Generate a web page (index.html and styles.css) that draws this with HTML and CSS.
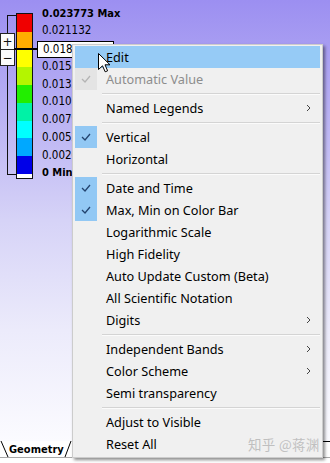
FILE: index.html
```html
<!DOCTYPE html>
<html>
<head>
<meta charset="utf-8">
<link rel="stylesheet" href="styles.css">
</head>
<body>
<div class="screen">
  <div class="viewport">
    <div class="legend">
      <div class="ctrl">
        <div class="bracket"></div>
        <div class="pm"><span class="pm-btn">+</span><span class="pm-btn">−</span></div>
      </div>
      <div class="bar">
        <div class="band b1"></div>
        <div class="band b2"></div>
        <div class="band b3"></div>
        <div class="band b4"></div>
        <div class="band b5"></div>
        <div class="band b6"></div>
        <div class="band b7"></div>
        <div class="band b8"></div>
        <div class="band b9"></div>
        <div class="band-min"></div>
      </div>
      <div class="labels">
        <div class="lbl bold">0.023773 Max</div>
        <div class="lbl">0.021132</div>
        <div class="lbl"><span class="edit">0.018492</span></div>
        <div class="lbl">0.015849</div>
        <div class="lbl">0.013208</div>
        <div class="lbl">0.010566</div>
        <div class="lbl">0.007924</div>
        <div class="lbl">0.005283</div>
        <div class="lbl">0.002641</div>
        <div class="lbl bold">0 Min</div>
      </div>
      <div class="marker"></div>
    </div>
  </div>
  <div class="tabbar">
    <div class="tab">
      <svg class="slant" width="9" height="16" viewBox="0 0 9 16"><path d="M1 0 L8 16" stroke="#000" stroke-width="1" fill="none"/></svg>
      <span class="tab-label">Geometry</span>
      <svg class="slant" width="8" height="16" viewBox="0 0 8 16"><path d="M7 0 L1 16" stroke="#000" stroke-width="1" fill="none"/></svg>
    </div>
    <div class="tab-fill"></div>
  </div>

  <div class="menu">
    <div class="item hover"><span class="chk"></span><span class="txt">Edit</span></div>
    <div class="item disabled"><span class="chk gray"><svg width="10" height="8" viewBox="0 0 10 8"><path d="M1 4 L4 7 L9 1" stroke="#b4b4b4" stroke-width="1.3" fill="none"/></svg></span><span class="txt">Automatic Value</span></div>
    <div class="sep"></div>
    <div class="item"><span class="chk"></span><span class="txt">Named Legends</span><svg class="chev" width="5" height="8" viewBox="0 0 5 8"><path d="M1 1 L4 4 L1 7" stroke="#444" stroke-width="1" fill="none"/></svg></div>
    <div class="sep"></div>
    <div class="item"><span class="chk on"><svg width="10" height="8" viewBox="0 0 10 8"><path d="M1 4 L4 7 L9 1" stroke="#23436e" stroke-width="1.3" fill="none"/></svg></span><span class="txt">Vertical</span></div>
    <div class="item"><span class="chk"></span><span class="txt">Horizontal</span></div>
    <div class="sep"></div>
    <div class="item"><span class="chk on"><svg width="10" height="8" viewBox="0 0 10 8"><path d="M1 4 L4 7 L9 1" stroke="#23436e" stroke-width="1.3" fill="none"/></svg></span><span class="txt">Date and Time</span></div>
    <div class="item"><span class="chk on"><svg width="10" height="8" viewBox="0 0 10 8"><path d="M1 4 L4 7 L9 1" stroke="#23436e" stroke-width="1.3" fill="none"/></svg></span><span class="txt">Max, Min on Color Bar</span></div>
    <div class="item"><span class="chk"></span><span class="txt">Logarithmic Scale</span></div>
    <div class="item"><span class="chk"></span><span class="txt">High Fidelity</span></div>
    <div class="item"><span class="chk"></span><span class="txt">Auto Update Custom (Beta)</span></div>
    <div class="item"><span class="chk"></span><span class="txt">All Scientific Notation</span></div>
    <div class="item"><span class="chk"></span><span class="txt">Digits</span><svg class="chev" width="5" height="8" viewBox="0 0 5 8"><path d="M1 1 L4 4 L1 7" stroke="#444" stroke-width="1" fill="none"/></svg></div>
    <div class="sep"></div>
    <div class="item"><span class="chk"></span><span class="txt">Independent Bands</span><svg class="chev" width="5" height="8" viewBox="0 0 5 8"><path d="M1 1 L4 4 L1 7" stroke="#444" stroke-width="1" fill="none"/></svg></div>
    <div class="item"><span class="chk"></span><span class="txt">Color Scheme</span><svg class="chev" width="5" height="8" viewBox="0 0 5 8"><path d="M1 1 L4 4 L1 7" stroke="#444" stroke-width="1" fill="none"/></svg></div>
    <div class="item"><span class="chk"></span><span class="txt">Semi transparency</span></div>
    <div class="sep"></div>
    <div class="item"><span class="chk"></span><span class="txt">Adjust to Visible</span></div>
    <div class="item"><span class="chk"></span><span class="txt">Reset All</span></div>
  </div>

  <svg class="cursor" width="13" height="20" viewBox="0 0 13 20"><path d="M0.5 0.5 L0.5 16.5 L4.5 12.8 L7.2 18.8 L9.6 17.8 L7 11.8 L12 11.8 Z" fill="#fff" stroke="#000" stroke-width="1" stroke-linejoin="miter"/></svg>
  <div class="watermark">知乎 @蒋渊</div>
</div>
</body>
</html>
```

FILE: styles.css
```css
html, body {
  margin: 0;
  padding: 0;
  background: #fff;
}
.screen {
  position: relative;
  width: 330px;
  height: 463px;
  overflow: hidden;
  display: flex;
  flex-direction: column;
  background: #fff;
}
.viewport {
  height: 441px;
  flex: none;
  background: linear-gradient(to bottom, #9c8ff1 0%, #b8b0f3 25%, #d6d3f7 50%, #ecebfb 75%, #fbfbff 100%);
}

/* legend */
.legend {
  position: relative;
  display: flex;
  align-items: flex-start;
}
.ctrl {
  width: 16px;
  display: grid;
}
.bracket {
  grid-area: 1 / 1;
  margin-top: 15px;
  margin-left: 7px;
  width: 8px;
  height: 158px;
  border-left: 1px solid #111;
  border-top: 1px solid #111;
  border-bottom: 1px solid #111;
}
.pm {
  grid-area: 1 / 1;
  margin-top: 33px;
  width: 13px;
  height: 31px;
  background: #fbfbfb;
  border: 1px solid #222;
  display: flex;
  flex-direction: column;
}
.pm-btn {
  flex: 1;
  display: flex;
  align-items: center;
  justify-content: center;
  font-family: "DejaVu Sans", sans-serif;
  font-size: 12px;
  line-height: 1;
  color: #111;
}
.pm-btn + .pm-btn {
  border-top: 1px solid #222;
}
.bar {
  margin-top: 13px;
  width: 15px;
  border: 1px solid #111;
  display: flex;
  flex-direction: column;
}
.band { height: 17.75px; }
.b1 { background: #f00000; }
.b2 { background: #ffac00; }
.b3 { background: #ffff00; }
.b4 { background: #b4f500; }
.b5 { background: #22ee00; }
.b6 { background: #00f2a6; }
.b7 { background: #00ffff; }
.b8 { background: #00a8ff; }
.b9 { background: #0000e8; }
.band-min { height: 4px; background: #fff; }
.labels {
  margin-left: 9px;
  padding-top: 4.6px;
  display: flex;
  flex-direction: column;
}
.lbl {
  height: 17.75px;
  line-height: 17.75px;
  font-family: "DejaVu Sans Condensed", "DejaVu Sans", sans-serif;
  font-size: 11.5px;
  color: #000;
  white-space: nowrap;
}
.lbl.bold {
  font-weight: bold;
  font-size: 11px;
}
.edit {
  display: inline-block;
  margin-left: -5px;
  padding-left: 5px;
  width: 70px;
  height: 15px;
  line-height: 15px;
  background: #fff;
  border: 1px solid #000;
  vertical-align: top;
  margin-top: 0.5px;
}
.marker {
  position: absolute;
  left: 14px;
  top: 48px;
  width: 23px;
  height: 2px;
  background: #000;
}

/* tab bar */
.tabbar {
  height: 16px;
  display: flex;
  align-items: stretch;
  border-bottom: 1px solid #a8a8a8;
  background: #fff;
}
.tab {
  display: flex;
  align-items: stretch;
}
.slant { display: block; }
.tab-label {
  font-family: "DejaVu Sans Condensed", "DejaVu Sans", sans-serif;
  font-weight: bold;
  font-size: 11px;
  line-height: 16px;
  padding-top: 1px;
  color: #000;
}
.tab-fill {
  flex: 1;
  border-top: 1px solid #000;
}

/* context menu */
.menu {
  position: absolute;
  left: 72px;
  top: 44px;
  width: 245px;
  padding: 1px 2px 2px 2px;
  background: #f0f0f0;
  border: 1px solid #cccccc;
  box-shadow: 2px 2px 3px rgba(0, 0, 0, 0.45);
  font-family: "Noto Sans", "Open Sans", sans-serif;
  font-size: 12.7px;
  color: #000;
}
.item {
  height: 22px;
  display: flex;
  align-items: center;
}
.item.hover {
  background: #96cbf6;
}
.item.disabled .txt {
  color: #8d8d8d;
}
.chk {
  width: 22px;
  height: 22px;
  flex: none;
  display: flex;
  align-items: center;
  justify-content: center;
}
.chk.on {
  background: #92c8f4;
}
.chk.gray {
  background: #e4e4e4;
}
.chk svg { display: block; }
.txt {
  margin-left: 9px;
  white-space: nowrap;
}
.chev {
  margin-left: auto;
  margin-right: 9px;
  display: block;
}
.sep {
  height: 1px;
  margin: 3px 0 3px 27px;
  background: #d4d4d4;
  border-bottom: 1px solid #fbfbfb;
  margin-bottom: 2px;
}

.cursor {
  position: absolute;
  left: 98px;
  top: 53px;
}
.watermark {
  position: absolute;
  left: 248px;
  top: 434px;
  font-family: "Noto Sans CJK SC", sans-serif;
  font-size: 13.5px;
  color: rgba(175, 175, 175, 0.75);
  white-space: nowrap;
  letter-spacing: 0.3px;
}
```
